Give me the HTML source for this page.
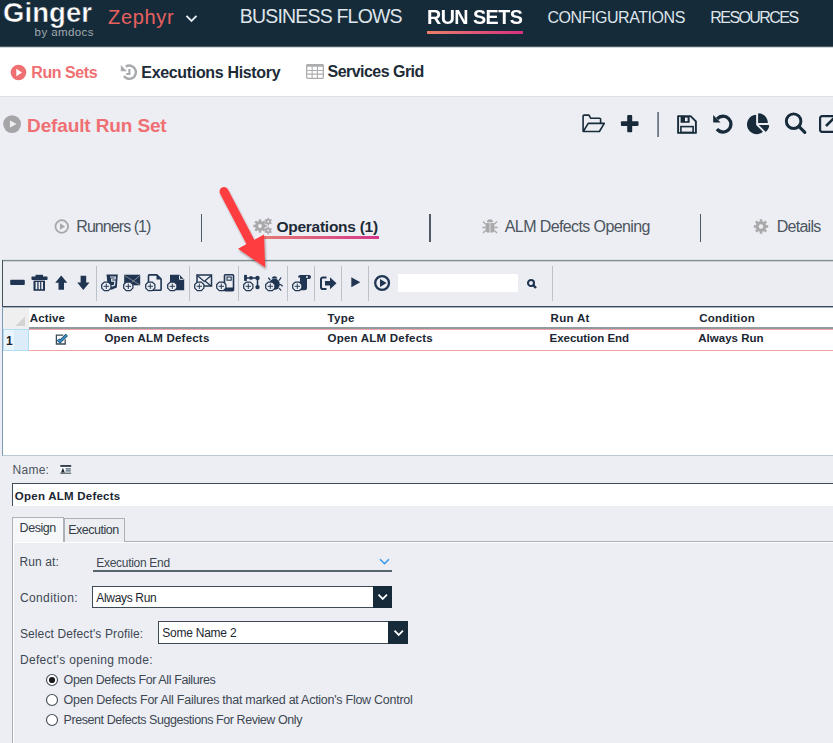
<!DOCTYPE html>
<html><head><meta charset="utf-8"><style>
html,body{margin:0;padding:0;}
body{width:833px;height:743px;overflow:hidden;position:relative;background:#edeef3;font-family:"Liberation Sans",sans-serif;}
.t{position:absolute;white-space:pre;line-height:1;}
svg{overflow:visible}
</style></head><body>
<div style='position:absolute;left:0px;top:0px;width:833px;height:46px;background:#162b3a'></div>
<svg style='position:absolute;left:185px;top:14px;' width='13' height='9' viewBox='0 0 13 9'><polyline points='1.5,1.8 6.5,7 11.5,1.8' fill='none' stroke='#e4edf4' stroke-width='1.9'/></svg>
<div style='position:absolute;left:427px;top:31px;width:96px;height:3px;background:linear-gradient(90deg,#e9806a,#d7307f)'></div>
<div style='position:absolute;left:0px;top:46px;width:833px;height:50px;background:#ffffff'></div>
<div style='position:absolute;left:0px;top:46px;width:833px;height:1px;background:#4b5862'></div>
<div style='position:absolute;left:0px;top:47px;width:833px;height:1px;background:#d3d6d9'></div>
<div style='position:absolute;left:0px;top:96px;width:833px;height:1px;background:#dfe0e6'></div>
<svg style='position:absolute;left:10px;top:64px;' width='17' height='17' viewBox='0 0 17 17'><circle cx='8.5' cy='8.5' r='7.8' fill='#ef6f73'/><path d='M6.3 4.8 L12 8.5 L6.3 12.2Z' fill='#fff'/></svg>
<svg style='position:absolute;left:115px;top:58px;' width='27' height='27' viewBox='0 0 27 27'><path d='M10.8 8.6 A6.6 6.6 0 1 1 8.9 18' fill='none' stroke='#a9abae' stroke-width='2.5'/><path d='M5.8 7 L5.8 13.3 L12 13.3Z' fill='#a9abae'/><path d='M14.4 11 V16 H11.2' fill='none' stroke='#a9abae' stroke-width='2.2'/></svg>
<svg style='position:absolute;left:306px;top:64px;' width='18' height='15' viewBox='0 0 18 15'><rect x='0.65' y='1.1' width='16.7' height='13.25' rx='1' fill='none' stroke='#acadaf' stroke-width='1.3'/><rect x='0.3' y='0' width='17.4' height='2.7' rx='0.8' fill='#acadaf'/><path d='M0.5 6.55 H17.5 M0.5 10.15 H17.5 M6.15 1 V14 M11.45 1 V14' stroke='#acadaf' stroke-width='1.1'/></svg>
<svg style='position:absolute;left:3px;top:114.5px;' width='18' height='18' viewBox='0 0 18 18'><circle cx='9.1' cy='9.1' r='8.9' fill='#a5a5a7'/><path d='M6.9 5.6 Q6.6 5.3 7.1 5.5 L13.6 9 L7.1 12.6 Q6.6 12.9 6.9 12.4Z' fill='#edeef3'/></svg>
<svg style='position:absolute;left:578px;top:110px;' width='30' height='25' viewBox='0 0 30 25'><path d='M5.1 21.5 V6.2 A1.1 1.1 0 0 1 6.2 5.1 H11 L12.6 8.2 H21.6 A1 1 0 0 1 22.6 9.2 V13' fill='none' stroke='#172b3a' stroke-width='1.6' stroke-linejoin='round'/><path d='M5.3 21.5 L10.2 13.4 H26.3 L21.4 21.5Z' fill='none' stroke='#172b3a' stroke-width='1.6' stroke-linejoin='round'/></svg>
<svg style='position:absolute;left:620px;top:114px;' width='20' height='19' viewBox='0 0 20 19'><rect x='0.9' y='7.3' width='17.6' height='4.7' rx='0.9' fill='#172b3a'/><rect x='7.2' y='1' width='5' height='17.2' rx='0.9' fill='#172b3a'/></svg>
<div style='position:absolute;left:657px;top:112px;width:1px;height:25px;background:#8794a0'></div>
<div style='position:absolute;left:658px;top:112px;width:1px;height:25px;background:#6a7883'></div>
<svg style='position:absolute;left:677px;top:114.5px;' width='20' height='19' viewBox='0 0 20 19'><path d='M1.1 1.1 H13.6 L18.9 6.4 V17.9 H1.1Z' fill='none' stroke='#172b3a' stroke-width='1.9' stroke-linejoin='round'/><rect x='3.6' y='1' width='9' height='6.8' fill='#172b3a'/><rect x='8' y='2.6' width='2.6' height='3.6' fill='#ededf3'/><rect x='3.9' y='11.6' width='12.2' height='5.8' fill='none' stroke='#172b3a' stroke-width='1.6'/></svg>
<svg style='position:absolute;left:712px;top:113.2px;' width='22' height='22' viewBox='0 0 22 22'><path d='M5.2 5.8 A7.9 7.9 0 1 1 4.9 16.1' fill='none' stroke='#172b3a' stroke-width='3.3'/><path d='M1.2 2 L1.2 9.4 L8.6 9.4Z' fill='#172b3a'/></svg>
<svg style='position:absolute;left:747.3px;top:112.8px;' width='22.2' height='21.4' viewBox='0 0 544 512'><path fill='#172b3a' d='M527.79 288H290.5l158.03 158.03c6.04 6.04 15.98 6.53 22.19.68 38.7-36.46 65.320-85.61 73.13-140.86 1.34-9.46-6.51-17.85-16.06-17.85zm-15.83-64.8C503.72 103.74 408.26 8.28 288.8.04 279.68-.59 272 7.1 272 16.24V240h223.77c9.14 0 16.82-7.68 16.19-16.8zM224 288V50.71c0-9.55-8.39-17.4-17.84-16.06C86.99 51.490-4.1 155.6.14 280.37 4.5 408.51 114.83 513.59 243.03 511.98c50.4-.63 96.97-16.87 135.26-44.03 7.9-5.6 8.42-17.23 1.57-24.08L224 288z'/></svg>
<svg style='position:absolute;left:783.5px;top:112px;' width='23' height='22' viewBox='0 0 23 22'><circle cx='9.6' cy='9.2' r='7.3' fill='none' stroke='#172b3a' stroke-width='2.9'/><path d='M14.8 14.4 L20.8 20.3' stroke='#172b3a' stroke-width='3.2' stroke-linecap='round'/></svg>
<svg style='position:absolute;left:819px;top:114px;' width='16' height='19' viewBox='0 0 16 19'><rect x='1.1' y='2.2' width='15' height='15.6' rx='2' fill='none' stroke='#172b3a' stroke-width='2.2'/><path d='M7 12 L15 4' stroke='#172b3a' stroke-width='2.6'/></svg>
<svg style='position:absolute;left:53.5px;top:218.8px;' width='15.5' height='15' viewBox='0 0 15 15'><circle cx='7.5' cy='7.5' r='6.3' fill='none' stroke='#a5a7aa' stroke-width='1.8'/><path d='M5.8 4.3 L10.8 7.5 L5.8 10.7Z' fill='#a5a7aa'/></svg>
<div style='position:absolute;left:200.8px;top:214px;width:1.5px;height:27.5px;background:#4f5b66'></div>
<svg style='position:absolute;left:252.5px;top:218px;' width='20' height='16' viewBox='0 0 20 16'><g fill='#a9a9ab'><circle cx='7' cy='8' r='5'/><rect x='5.8' y='1.3' width='2.4' height='3' transform='rotate(0 7 8)'/><rect x='5.8' y='1.3' width='2.4' height='3' transform='rotate(45 7 8)'/><rect x='5.8' y='1.3' width='2.4' height='3' transform='rotate(90 7 8)'/><rect x='5.8' y='1.3' width='2.4' height='3' transform='rotate(135 7 8)'/><rect x='5.8' y='1.3' width='2.4' height='3' transform='rotate(180 7 8)'/><rect x='5.8' y='1.3' width='2.4' height='3' transform='rotate(225 7 8)'/><rect x='5.8' y='1.3' width='2.4' height='3' transform='rotate(270 7 8)'/><rect x='5.8' y='1.3' width='2.4' height='3' transform='rotate(315 7 8)'/><circle cx='15.2' cy='3.6' r='2.8'/><circle cx='15.2' cy='12.5' r='2.8'/><rect x='14.5' y='-0.3' width='1.4' height='2' transform='rotate(0 15.2 3.6)'/><rect x='14.5' y='-0.3' width='1.4' height='2' transform='rotate(60 15.2 3.6)'/><rect x='14.5' y='-0.3' width='1.4' height='2' transform='rotate(120 15.2 3.6)'/><rect x='14.5' y='-0.3' width='1.4' height='2' transform='rotate(180 15.2 3.6)'/><rect x='14.5' y='-0.3' width='1.4' height='2' transform='rotate(240 15.2 3.6)'/><rect x='14.5' y='-0.3' width='1.4' height='2' transform='rotate(300 15.2 3.6)'/><rect x='14.5' y='8.6' width='1.4' height='2' transform='rotate(0 15.2 12.5)'/><rect x='14.5' y='8.6' width='1.4' height='2' transform='rotate(60 15.2 12.5)'/><rect x='14.5' y='8.6' width='1.4' height='2' transform='rotate(120 15.2 12.5)'/><rect x='14.5' y='8.6' width='1.4' height='2' transform='rotate(180 15.2 12.5)'/><rect x='14.5' y='8.6' width='1.4' height='2' transform='rotate(240 15.2 12.5)'/><rect x='14.5' y='8.6' width='1.4' height='2' transform='rotate(300 15.2 12.5)'/></g><circle cx='7' cy='8' r='1.9' fill='#ededf3'/><circle cx='15.2' cy='3.6' r='1' fill='#ededf3'/><circle cx='15.2' cy='12.5' r='1' fill='#ededf3'/></svg>
<div style='position:absolute;left:262px;top:236px;width:116.5px;height:3px;background:linear-gradient(90deg,#e57a73,#d4378a)'></div>
<div style='position:absolute;left:429.3px;top:214px;width:1.5px;height:27.5px;background:#4f5b66'></div>
<svg style='position:absolute;left:482px;top:217.5px;' width='16' height='16' viewBox='0 0 16 16'><g fill='#a9a9ab'><path d='M5 4 A3 2.8 0 0 1 11 4Z'/><rect x='3.5' y='4.8' width='9' height='9.6' rx='2'/></g><rect x='7.6' y='5' width='0.8' height='9.5' fill='#ededf3'/><g stroke='#a9a9ab' stroke-width='1.4'><path d='M3.5 6 L1 3.5 M12.5 6 L15 3.5 M3.5 9.5 H0.3 M12.5 9.5 H15.7 M3.5 12.5 L1 15 M12.5 12.5 L15 15'/></g></svg>
<div style='position:absolute;left:699.5px;top:214px;width:1.5px;height:27.5px;background:#4f5b66'></div>
<svg style='position:absolute;left:753px;top:219px;' width='16' height='15' viewBox='0 0 16 15'><g fill='#a9a9ab'><circle cx='8' cy='7.5' r='5.2'/><rect x='6.7' y='0.3' width='2.6' height='3' transform='rotate(0 8 7.5)'/><rect x='6.7' y='0.3' width='2.6' height='3' transform='rotate(45 8 7.5)'/><rect x='6.7' y='0.3' width='2.6' height='3' transform='rotate(90 8 7.5)'/><rect x='6.7' y='0.3' width='2.6' height='3' transform='rotate(135 8 7.5)'/><rect x='6.7' y='0.3' width='2.6' height='3' transform='rotate(180 8 7.5)'/><rect x='6.7' y='0.3' width='2.6' height='3' transform='rotate(225 8 7.5)'/><rect x='6.7' y='0.3' width='2.6' height='3' transform='rotate(270 8 7.5)'/><rect x='6.7' y='0.3' width='2.6' height='3' transform='rotate(315 8 7.5)'/></g><circle cx='8' cy='7.5' r='2.2' fill='#ededf3'/></svg>
<div style='position:absolute;left:2px;top:260px;width:831px;height:47px;background:#ecedf3'></div>
<div style='position:absolute;left:2px;top:259px;width:831px;height:1px;background:#dfe2e7'></div>
<div style='position:absolute;left:2px;top:260px;width:831px;height:1px;background:#7f8c95'></div>
<div style='position:absolute;left:2px;top:261px;width:831px;height:1px;background:#ccd1d6'></div>
<div style='position:absolute;left:2px;top:260px;width:1px;height:47px;background:#44525d'></div>
<div style='position:absolute;left:2px;top:306px;width:831px;height:1px;background:#3a4a58'></div>
<div style='position:absolute;left:2px;top:307px;width:831px;height:1px;background:#a5b4c2'></div>
<div style='position:absolute;left:96.0px;top:265.5px;width:1px;height:35px;background:#bcc2c8'></div>
<div style='position:absolute;left:189.0px;top:265.5px;width:1px;height:35px;background:#bcc2c8'></div>
<div style='position:absolute;left:238.1px;top:265.5px;width:1px;height:35px;background:#bcc2c8'></div>
<div style='position:absolute;left:287.1px;top:265.5px;width:1px;height:35px;background:#bcc2c8'></div>
<div style='position:absolute;left:314.0px;top:265.5px;width:1px;height:35px;background:#bcc2c8'></div>
<div style='position:absolute;left:341.0px;top:265.5px;width:1px;height:35px;background:#bcc2c8'></div>
<div style='position:absolute;left:368.1px;top:265.5px;width:1px;height:35px;background:#bcc2c8'></div>
<div style='position:absolute;left:552.0px;top:265.5px;width:1px;height:35px;background:#bcc2c8'></div>
<svg style='position:absolute;left:9.5px;top:274.3px;' width='15' height='17' viewBox='0 0 15 17'><g fill='#1f3552'><rect x='0.2' y='5.8' width='14.6' height='5.3' rx='1'/></g></svg>
<svg style='position:absolute;left:30.5px;top:274.3px;' width='17' height='17' viewBox='0 0 17 17'><g fill='#1f3552'><rect x='4.5' y='0.8' width='7.5' height='2.2'/><rect x='0.5' y='2.6' width='16' height='3.3' rx='0.6'/><path d='M2.5 6.6 H14 V16.8 H2.5Z'/><rect x='4.6' y='8' width='1.7' height='7.2' fill='#ecedf3'/><rect x='7.6' y='8' width='1.5' height='7.2' fill='#ecedf3'/><rect x='10.3' y='8' width='1.7' height='7.2' fill='#ecedf3'/></g></svg>
<svg style='position:absolute;left:54.8px;top:274.3px;' width='13' height='17' viewBox='0 0 13 17'><g fill='#1f3552'><path d='M6.2 1.5 L12.3 8.8 H9 V15.8 H3.5 V8.8 H0.2Z'/></g></svg>
<svg style='position:absolute;left:76.5px;top:274.3px;' width='13' height='17' viewBox='0 0 13 17'><g fill='#1f3552'><path d='M6.3 15.9 L12.5 8.5 H9.2 V1.7 H3.6 V8.5 H0.2Z'/></g></svg>
<svg style='position:absolute;left:101.8px;top:274.3px;' width='17' height='17' viewBox='0 0 17 17'><g fill='#1f3552'><path d='M4.5 0.5 H15.8 L14.8 13.5 L9.5 15.8 L6 14.5Z'/><path d='M8 3 H13.3 L13.1 5 H9.6 L9.8 7.2 H12.9 L12.5 11 L10 12 L8.5 11.4' fill='none' stroke='#ecedf3' stroke-width='1.2'/><path d='M2.30 8.00 L6.30 8.00 L8.90 10.50 L8.90 14.10 L6.30 16.60 L2.30 16.60 L-0.30 14.10 L-0.30 10.50Z' fill='#ecedf3' stroke='#1f3552' stroke-width='1.25'/><path d='M1.5999999999999996 12.3 H7.0 M4.3 9.600000000000001 V15.0' stroke='#1f3552' stroke-width='0.95'/></g></svg>
<svg style='position:absolute;left:123.8px;top:274.3px;' width='17' height='17' viewBox='0 0 17 17'><g fill='#1f3552'><rect x='0.2' y='0.7' width='16' height='10.6'/><path d='M0.6 1.6 L16 11 M15.8 1.6 L7 9' stroke='#9a9ea6' stroke-width='0.8'/><path d='M2.30 8.00 L6.30 8.00 L8.90 10.50 L8.90 14.10 L6.30 16.60 L2.30 16.60 L-0.30 14.10 L-0.30 10.50Z' fill='#ecedf3' stroke='#1f3552' stroke-width='1.25'/><path d='M1.5999999999999996 12.3 H7.0 M4.3 9.600000000000001 V15.0' stroke='#1f3552' stroke-width='0.95'/></g></svg>
<svg style='position:absolute;left:145.7px;top:274.3px;' width='17' height='17' viewBox='0 0 17 17'><g fill='#1f3552'><path d='M3.3 0.9 H10.8 L15.1 5.2 V15.4 A0.8 0.8 0 0 1 14.3 16.2 H3.3 A0.8 0.8 0 0 1 2.5 15.4 V1.7 A0.8 0.8 0 0 1 3.3 0.9Z' fill='none' stroke='#1f3552' stroke-width='1.6'/><path d='M10.5 1 V5.5 H15' fill='#1f3552'/><path d='M2.30 8.00 L6.30 8.00 L8.90 10.50 L8.90 14.10 L6.30 16.60 L2.30 16.60 L-0.30 14.10 L-0.30 10.50Z' fill='#ecedf3' stroke='#1f3552' stroke-width='1.25'/><path d='M1.5999999999999996 12.3 H7.0 M4.3 9.600000000000001 V15.0' stroke='#1f3552' stroke-width='0.95'/></g></svg>
<svg style='position:absolute;left:167.8px;top:274.3px;' width='17' height='17' viewBox='0 0 17 17'><g fill='#1f3552'><path d='M2 0.8 H11.6 L16.2 5.4 V16.3 H2Z'/><path d='M11.5 1.5 V5.3 H15.5' fill='none' stroke='#ecedf3' stroke-width='1'/><path d='M2.30 8.00 L6.30 8.00 L8.90 10.50 L8.90 14.10 L6.30 16.60 L2.30 16.60 L-0.30 14.10 L-0.30 10.50Z' fill='#ecedf3' stroke='#1f3552' stroke-width='1.25'/><path d='M1.5999999999999996 12.3 H7.0 M4.3 9.600000000000001 V15.0' stroke='#1f3552' stroke-width='0.95'/></g></svg>
<svg style='position:absolute;left:194.8px;top:274.3px;' width='17' height='17' viewBox='0 0 17 17'><g fill='#1f3552'><rect x='2' y='1' width='14.5' height='11' fill='none' stroke='#1f3552' stroke-width='1.5'/><path d='M2.3 1.5 L9.25 7.5 L16.2 1.5 M10 7 L16.2 12 ' fill='none' stroke='#1f3552' stroke-width='1.3'/><path d='M2.30 8.00 L6.30 8.00 L8.90 10.50 L8.90 14.10 L6.30 16.60 L2.30 16.60 L-0.30 14.10 L-0.30 10.50Z' fill='#ecedf3' stroke='#1f3552' stroke-width='1.25'/><path d='M1.5999999999999996 12.3 H7.0 M4.3 9.600000000000001 V15.0' stroke='#1f3552' stroke-width='0.95'/></g></svg>
<svg style='position:absolute;left:216.7px;top:274.3px;' width='17' height='17' viewBox='0 0 17 17'><g fill='#1f3552'><rect x='7.5' y='0.8' width='9' height='15.8' rx='0.8' fill='none' stroke='#1f3552' stroke-width='1.6'/><rect x='10' y='3' width='4.2' height='3.2' fill='none' stroke='#1f3552' stroke-width='1.1'/><rect x='8' y='13.5' width='8' height='3'/><path d='M2.30 8.00 L6.30 8.00 L8.90 10.50 L8.90 14.10 L6.30 16.60 L2.30 16.60 L-0.30 14.10 L-0.30 10.50Z' fill='#ecedf3' stroke='#1f3552' stroke-width='1.25'/><path d='M1.5999999999999996 12.3 H7.0 M4.3 9.600000000000001 V15.0' stroke='#1f3552' stroke-width='0.95'/></g></svg>
<svg style='position:absolute;left:243.8px;top:274.3px;' width='17' height='17' viewBox='0 0 17 17'><g fill='#1f3552'><rect x='0.1' y='0.9' width='2.8' height='6'/><path d='M2 3.9 H13.5 V13' fill='none' stroke='#1f3552' stroke-width='1.5'/><circle cx='7' cy='3.9' r='1.9'/><circle cx='13.5' cy='3.9' r='2.2'/><circle cx='13.5' cy='13.1' r='2.2'/><path d='M2.30 8.00 L6.30 8.00 L8.90 10.50 L8.90 14.10 L6.30 16.60 L2.30 16.60 L-0.30 14.10 L-0.30 10.50Z' fill='#ecedf3' stroke='#1f3552' stroke-width='1.25'/><path d='M1.5999999999999996 12.3 H7.0 M4.3 9.600000000000001 V15.0' stroke='#1f3552' stroke-width='0.95'/></g></svg>
<svg style='position:absolute;left:265.7px;top:274.3px;' width='18' height='17' viewBox='0 0 18 17'><g fill='#1f3552'><path d='M5.6 4.6 A3 3.2 0 0 1 11.4 4.6Z'/><ellipse cx='8.6' cy='10.2' rx='5.2' ry='5.6'/><path d='M4.2 6.2 Q3 4.6 2.4 3.6 M13 6.4 Q14.6 4.8 15 3.4 M13.8 10.4 Q15.6 10.8 16.6 12.4 M12.8 14.2 Q14.6 15.2 15 16.6' fill='none' stroke='#1f3552' stroke-width='1.2'/><path d='M2.30 8.00 L6.30 8.00 L8.90 10.50 L8.90 14.10 L6.30 16.60 L2.30 16.60 L-0.30 14.10 L-0.30 10.50Z' fill='#ecedf3' stroke='#1f3552' stroke-width='1.25'/><path d='M1.5999999999999996 12.3 H7.0 M4.3 9.600000000000001 V15.0' stroke='#1f3552' stroke-width='0.95'/></g></svg>
<svg style='position:absolute;left:292.8px;top:274.3px;' width='17' height='17' viewBox='0 0 17 17'><g fill='#1f3552'><path d='M5 3.5 A2.5 2.5 0 0 1 7.5 1 H16 A2 2 0 0 1 16 5 H14 V13.8 A2.5 2.5 0 0 1 11.5 16.3 H7 V3.5Z'/><circle cx='14' cy='3' r='1.1' fill='#ecedf3'/><path d='M2.30 8.00 L6.30 8.00 L8.90 10.50 L8.90 14.10 L6.30 16.60 L2.30 16.60 L-0.30 14.10 L-0.30 10.50Z' fill='#ecedf3' stroke='#1f3552' stroke-width='1.25'/><path d='M1.5999999999999996 12.3 H7.0 M4.3 9.600000000000001 V15.0' stroke='#1f3552' stroke-width='0.95'/></g></svg>
<svg style='position:absolute;left:319.5px;top:275.6px;' width='17' height='15' viewBox='0 0 17 15'><g fill='#1f3552'><path d='M6.5 1.5 H2.8 A1.8 1.8 0 0 0 1 3.3 V11.2 A1.8 1.8 0 0 0 2.8 13 H6.5' fill='none' stroke='#1f3552' stroke-width='2'/><path d='M5 5 H10 V1.2 L16.5 7.2 L10 13.3 V9.5 H5Z'/></g></svg>
<svg style='position:absolute;left:351px;top:277.4px;' width='10' height='11' viewBox='0 0 10 11'><g fill='#1f3552'><path d='M0.3 0.3 L9.3 5.3 L0.3 10.3Z'/></g></svg>
<svg style='position:absolute;left:373.8px;top:274.9px;' width='17' height='17' viewBox='0 0 17 17'><g fill='#1f3552'><circle cx='8.1' cy='8' r='6.9' fill='none' stroke='#1f3552' stroke-width='2.3'/><path d='M6 3.9 L12.6 8 L6 12.1Z'/></g></svg>
<div style='position:absolute;left:398px;top:274px;width:120px;height:17.8px;background:#ffffff'></div>
<svg style='position:absolute;left:527px;top:279px;' width='10' height='10' viewBox='0 0 10 10'><g fill='#1f3552'><circle cx='4' cy='4' r='3' fill='none' stroke='#1f3552' stroke-width='2.1'/><path d='M6.2 6.2 L9 9' stroke='#1f3552' stroke-width='2.4'/></g></svg>
<div style='position:absolute;left:2px;top:308px;width:831px;height:148px;background:#ffffff;border-left:1px solid #7d9bb6;border-bottom:1px solid #b9c9d6;box-sizing:border-box'></div>
<div style='position:absolute;left:3px;top:308px;width:25.5px;height:21px;background:#efefef'></div>
<svg style='position:absolute;left:14px;top:315px;' width='12' height='12' viewBox='0 0 12 12'><path d='M1.5 11 L11 1.5 V11Z' fill='#d3d3d3'/></svg>
<div style='position:absolute;left:28.5px;top:327px;width:805px;height:1.6px;background:#8e9ba3'></div>
<div style='position:absolute;left:28.5px;top:328.6px;width:805px;height:1.2px;background:#f3a3a3'></div>
<div style='position:absolute;left:28.5px;top:349.8px;width:805px;height:1.2px;background:#f3a3a3'></div>
<div style='position:absolute;left:3px;top:328.6px;width:25.5px;height:22.3px;background:#dcecf8;border:1px solid #b1dcf5;box-sizing:border-box'></div>
<div style='position:absolute;left:4px;top:329.6px;width:9.5px;height:20.3px;background:#eaf4fb'></div>
<svg style='position:absolute;left:55px;top:333px;' width='14' height='12.5' viewBox='0 0 14 12.5'><path d='M8.2 2.2 H1.4 V11 H10.2 V6.5' fill='none' stroke='#3a4a56' stroke-width='1.3'/><path d='M3 6.6 L5 8.6 L11.8 1.8' fill='none' stroke='#23384a' stroke-width='3.2'/><path d='M3 6.6 L5 8.6 L11.8 1.8' fill='none' stroke='#3590cc' stroke-width='1.9'/></svg>
<svg style='position:absolute;left:60px;top:465px;' width='11.5' height='9.5' viewBox='0 0 11.5 9.5'><rect x='0.3' y='0' width='10.9' height='8.8' fill='#ffffff'/><rect x='0.3' y='0' width='10.9' height='1.9' fill='#333f4a'/><rect x='0.3' y='7.6' width='10.9' height='1.2' fill='#4a5560'/><path d='M1 7.4 L2.9 2.8 L4.8 7.4Z' fill='#1d2a36'/><path d='M5.6 3.9 H10.8 M5.6 5.9 H10.8' stroke='#485d70' stroke-width='1.1'/></svg>
<div style='position:absolute;left:12px;top:483px;width:821px;height:23px;background:#ffffff;border-top:1.5px solid #3e4c57;border-left:1.5px solid #3e4c57;box-sizing:border-box'></div>
<div style='position:absolute;left:12px;top:541px;width:821px;height:202px;border-top:1px solid #a9afb6;border-left:1px solid #a9afb6;box-sizing:border-box'></div>
<div style='position:absolute;left:13px;top:542px;width:820px;height:201px;border-top:1px solid #ffffff;border-left:1px solid #ffffff;box-sizing:border-box'></div>
<div style='position:absolute;left:63.5px;top:518px;width:61.5px;height:23.5px;background:#eceef2;border:1px solid #acb2b9;border-bottom:none;box-sizing:border-box'></div>
<div style='position:absolute;left:12px;top:516.5px;width:52px;height:25.5px;background:#f6f7f9;border:1px solid #acb2b9;border-bottom:none;box-sizing:border-box'></div>
<div style='position:absolute;left:93px;top:570.2px;width:299px;height:1.6px;background:#56646e'></div>
<svg style='position:absolute;left:378.5px;top:558px;' width='11' height='7' viewBox='0 0 11 7'><polyline points='1,1.2 5.5,5.6 10,1.2' fill='none' stroke='#3f9be8' stroke-width='1.5'/></svg>
<div style='position:absolute;left:92.3px;top:586px;width:300px;height:21.8px;background:#ffffff;border:1.4px solid #3c4a55;box-sizing:border-box'></div>
<div style='position:absolute;left:372.8px;top:586px;width:19.6px;height:21.8px;background:#172a39'></div>
<svg style='position:absolute;left:377.2px;top:592.6px;' width='11.5' height='8.5' viewBox='0 0 12 9'><polyline points='1.5,1.8 6,6.3 10.5,1.8' fill='none' stroke='#ffffff' stroke-width='1.8'/></svg>
<div style='position:absolute;left:158px;top:621.3px;width:250px;height:22.8px;background:#ffffff;border:1.4px solid #3c4a55;border-top-width:1.8px;box-sizing:border-box'></div>
<div style='position:absolute;left:388.3px;top:621.3px;width:19.9px;height:22.8px;background:#172a39'></div>
<svg style='position:absolute;left:393.3px;top:628.8px;' width='11.5' height='8.5' viewBox='0 0 12 9'><polyline points='1.5,1.8 6,6.3 10.5,1.8' fill='none' stroke='#ffffff' stroke-width='1.8'/></svg>
<svg style='position:absolute;left:45px;top:672.6px;' width='14' height='14' viewBox='0 0 14 14'><circle cx='7' cy='7' r='5.5' fill='#ffffff' stroke='#46505a' stroke-width='1.15'/><circle cx='7' cy='7' r='3.1' fill='#1a1a1a'/></svg>
<svg style='position:absolute;left:45px;top:692.6px;' width='14' height='14' viewBox='0 0 14 14'><circle cx='7' cy='7' r='5.5' fill='#ffffff' stroke='#46505a' stroke-width='1.15'/></svg>
<svg style='position:absolute;left:45px;top:712.6px;' width='14' height='14' viewBox='0 0 14 14'><circle cx='7' cy='7' r='5.5' fill='#ffffff' stroke='#46505a' stroke-width='1.15'/></svg>
<div class='t' style='left:3.0px;top:-1.28px;font-size:27.5px;font-weight:700;color:#ffffff;letter-spacing:0.075px;-webkit-text-stroke:0.5px #162b3a'>Ginger</div>
<div class='t' style='left:34.6px;top:27.07px;font-size:11.5px;font-weight:400;color:#bfc5ca;letter-spacing:0.399px;-webkit-text-stroke:0.2px #162b3a'>by amdocs</div>
<div class='t' style='left:108.1px;top:6.87px;font-size:20px;font-weight:400;color:#e8615f;letter-spacing:0.650px;'>Zephyr</div>
<div class='t' style='left:239.8px;top:7.29px;font-size:19.5px;font-weight:400;color:#dfe5ea;letter-spacing:-0.813px;'>BUSINESS FLOWS</div>
<div class='t' style='left:427.3px;top:6.55px;font-size:20.5px;font-weight:700;color:#ffffff;letter-spacing:-0.583px;transform:scaleX(0.9621);transform-origin:0 0;'>RUN SETS</div>
<div class='t' style='left:547.5px;top:9.96px;font-size:16px;font-weight:400;color:#dfe5ea;letter-spacing:-0.454px;'>CONFIGURATIONS</div>
<div class='t' style='left:710.3px;top:9.96px;font-size:16px;font-weight:400;color:#dfe5ea;letter-spacing:-1.570px;'>RESOURCES</div>
<div class='t' style='left:31.3px;top:64.86px;font-size:16px;font-weight:700;color:#ef6f73;letter-spacing:-0.435px;'>Run Sets</div>
<div class='t' style='left:141.3px;top:64.76px;font-size:16px;font-weight:700;color:#1d2b38;letter-spacing:-0.332px;'>Executions History</div>
<div class='t' style='left:327.5px;top:64.26px;font-size:16px;font-weight:700;color:#1d2b38;letter-spacing:-0.531px;'>Services Grid</div>
<div class='t' style='left:27.1px;top:116.42px;font-size:19px;font-weight:700;color:#ef6f73;letter-spacing:-0.132px;'>Default Run Set</div>
<div class='t' style='left:76.3px;top:219.06px;font-size:16px;font-weight:400;color:#4b5560;letter-spacing:-0.938px;'>Runners (1)</div>
<div class='t' style='left:276.5px;top:219.18px;font-size:15.5px;font-weight:700;color:#1d2b38;letter-spacing:-0.268px;'>Operations (1)</div>
<div class='t' style='left:504.8px;top:219.06px;font-size:16px;font-weight:400;color:#4b5560;letter-spacing:-0.607px;'>ALM Defects Opening</div>
<div class='t' style='left:776.7px;top:219.06px;font-size:16px;font-weight:400;color:#4b5560;letter-spacing:-0.718px;'>Details</div>
<div class='t' style='left:6.1px;top:335.04px;font-size:12px;font-weight:700;color:#1b2430;letter-spacing:0.000px;'>1</div>
<div class='t' style='left:29.7px;top:312.97px;font-size:11.5px;font-weight:700;color:#1b2633;letter-spacing:0.154px;'>Active</div>
<div class='t' style='left:104.4px;top:312.97px;font-size:11.5px;font-weight:700;color:#1b2633;letter-spacing:0.491px;'>Name</div>
<div class='t' style='left:327.6px;top:312.97px;font-size:11.5px;font-weight:700;color:#1b2633;letter-spacing:0.267px;'>Type</div>
<div class='t' style='left:550.5px;top:312.97px;font-size:11.5px;font-weight:700;color:#1b2633;letter-spacing:0.327px;'>Run At</div>
<div class='t' style='left:699.3px;top:312.97px;font-size:11.5px;font-weight:700;color:#1b2633;letter-spacing:0.230px;'>Condition</div>
<div class='t' style='left:104.4px;top:333.37px;font-size:11.5px;font-weight:700;color:#1b2633;letter-spacing:0.206px;'>Open ALM Defects</div>
<div class='t' style='left:327.6px;top:333.37px;font-size:11.5px;font-weight:700;color:#1b2633;letter-spacing:0.219px;'>Open ALM Defects</div>
<div class='t' style='left:549.6px;top:333.37px;font-size:11.5px;font-weight:700;color:#1b2633;letter-spacing:-0.031px;'>Execution End</div>
<div class='t' style='left:698.3px;top:333.37px;font-size:11.5px;font-weight:700;color:#1b2633;letter-spacing:0.001px;'>Always Run</div>
<div class='t' style='left:12.6px;top:464.04px;font-size:12px;font-weight:400;color:#4b5560;letter-spacing:0.239px;'>Name:</div>
<div class='t' style='left:14.8px;top:490.97px;font-size:11.5px;font-weight:700;color:#1b2633;letter-spacing:0.239px;'>Open ALM Defects</div>
<div class='t' style='left:19.6px;top:522.32px;font-size:12.5px;font-weight:400;color:#323c46;letter-spacing:-0.464px;'>Design</div>
<div class='t' style='left:68.2px;top:524.22px;font-size:12.5px;font-weight:400;color:#323c46;letter-spacing:-0.476px;'>Execution</div>
<div class='t' style='left:19.6px;top:555.94px;font-size:12px;font-weight:400;color:#3d4853;letter-spacing:0.083px;'>Run at:</div>
<div class='t' style='left:96.3px;top:557.14px;font-size:12px;font-weight:400;color:#3d4853;letter-spacing:-0.299px;'>Execution End</div>
<div class='t' style='left:19.9px;top:591.94px;font-size:12px;font-weight:400;color:#3d4853;letter-spacing:0.406px;'>Condition:</div>
<div class='t' style='left:96.3px;top:591.74px;font-size:12px;font-weight:400;color:#1d2730;letter-spacing:-0.329px;'>Always Run</div>
<div class='t' style='left:19.9px;top:627.54px;font-size:12px;font-weight:400;color:#3d4853;letter-spacing:0.129px;'>Select Defect&#x27;s Profile:</div>
<div class='t' style='left:162.2px;top:627.24px;font-size:12px;font-weight:400;color:#1d2730;letter-spacing:-0.230px;'>Some Name 2</div>
<div class='t' style='left:19.9px;top:653.84px;font-size:12px;font-weight:400;color:#3d4853;letter-spacing:0.328px;'>Defect&#x27;s opening mode:</div>
<div class='t' style='left:63.6px;top:673.52px;font-size:12.5px;font-weight:400;color:#3d4853;letter-spacing:-0.392px;'>Open Defects For All Failures</div>
<div class='t' style='left:63.6px;top:693.52px;font-size:12.5px;font-weight:400;color:#3d4853;letter-spacing:-0.265px;'>Open Defects For All Failures that marked at Action&#x27;s Flow Control</div>
<div class='t' style='left:63.6px;top:713.52px;font-size:12.5px;font-weight:400;color:#3d4853;letter-spacing:-0.435px;'>Present Defects Suggestions For Review Only</div>
<svg style='position:absolute;left:0;top:0' width='833' height='743'><defs><filter id='sh' x='-20%' y='-20%' width='140%' height='140%'><feGaussianBlur in='SourceAlpha' stdDeviation='1.2'/><feOffset dx='1' dy='1.5'/><feComponentTransfer><feFuncA type='linear' slope='0.35'/></feComponentTransfer><feMerge><feMergeNode/><feMergeNode in='SourceGraphic'/></feMerge></filter></defs><g filter='url(#sh)' fill='#fe3d40'><path d='M224 191.5 L252 245' stroke='#fe3d40' stroke-width='9' stroke-linecap='round'/><path d='M238 248.7 L264 234.5 L265.2 267.5Z'/></g></svg>
</body></html>
